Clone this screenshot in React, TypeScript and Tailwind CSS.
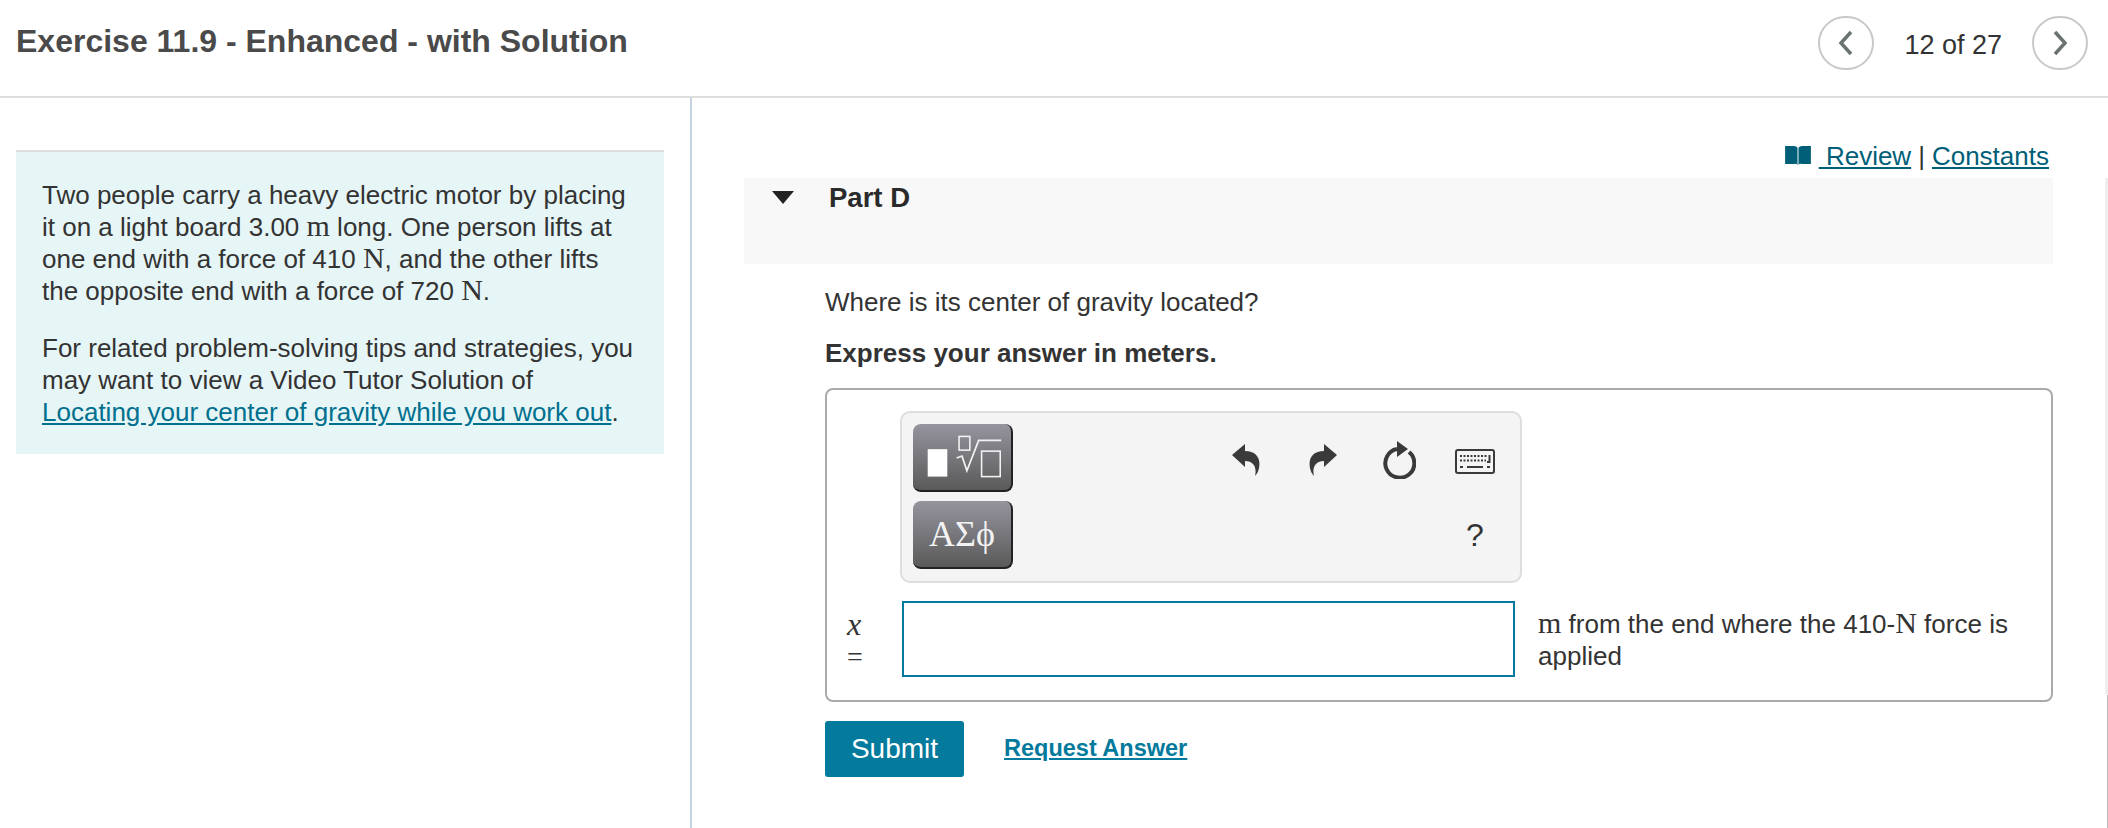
import React from "react";

const sans = "font-['Liberation_Sans',Arial,sans-serif]";
const math = "font-['Liberation_Serif',serif] text-[30px] leading-none";

const Chevron = ({ dir }: { dir: "left" | "right" }) => (
  <svg width="16" height="26" viewBox="0 0 16 26" fill="none">
    <path
      d={dir === "left" ? "M13 2 L3 13 L13 24" : "M3 2 L13 13 L3 24"}
      stroke="#6a7272"
      strokeWidth="3.5"
    />
  </svg>
);

const BookIcon = () => (
  <svg className="mr-[8px]" width="26" height="21" viewBox="0 0 27 22" fill="#005f78">
    <path d="M0 1 H9 Q12 1 13 3 V21 Q12 19 9 20 H0 Z" />
    <path d="M27 1 H18 Q15 1 14 3 V21 Q15 19 18 20 H27 Z" />
  </svg>
);

const UndoIcon = () => (
  <svg width="28" height="32" viewBox="0 0 28 32" fill="#3a3a3a">
    <path d="M0 11 L13 0 V7 C24 7 29 14 27 24 C26.5 27 25 30 23 32 C25 24 22 17 13 17 V23 Z" />
  </svg>
);

const RedoIcon = () => (
  <svg width="28" height="32" viewBox="0 0 28 32" fill="#3a3a3a">
    <path d="M28 11 L15 0 V7 C4 7 -1 14 1 24 C1.5 27 3 30 5 32 C3 24 6 17 15 17 V23 Z" />
  </svg>
);

const ResetIcon = () => (
  <svg width="34" height="38" viewBox="0 0 34 38" fill="none">
    <path d="M27 11 A14.5 14.5 0 1 1 15 8" stroke="#3a3a3a" strokeWidth="4" />
    <path d="M15 0 L26 8 L15 16 Z" fill="#3a3a3a" />
  </svg>
);

const KeyboardIcon = () => (
  <svg className="mt-[3px]" width="40" height="25" viewBox="0 0 40 25" fill="none">
    <rect x="1" y="1" width="38" height="23" rx="2" stroke="#3a3a3a" strokeWidth="2" />
    <path d="M5 7 H33" stroke="#3a3a3a" strokeWidth="2" strokeDasharray="2 1.5" />
    <path d="M5 11.5 H31" stroke="#3a3a3a" strokeWidth="2" strokeDasharray="2 1.5" />
    <path d="M34.5 6 V13 H32" stroke="#3a3a3a" strokeWidth="2" />
    <path d="M5 18 H8 M12 18 H28 M32 18 H35" stroke="#3a3a3a" strokeWidth="2" />
  </svg>
);

const TemplateGlyph = () => (
  <svg width="100" height="68" viewBox="0 0 100 68" fill="none">
    <rect x="15" y="26" width="20" height="28" fill="#fff" />
    <rect x="47" y="13" width="11" height="14" stroke="#f2f2f2" strokeWidth="1.6" />
    <path d="M44.5 35 L50 33 L55 48 L67 17 H90" stroke="#f2f2f2" strokeWidth="1.8" />
    <rect x="70" y="28" width="19" height="26" stroke="#f2f2f2" strokeWidth="1.6" />
  </svg>
);

const MathButton = ({ children }: { children: React.ReactNode }) => (
  <button className="flex h-[68px] w-[100px] items-center justify-center rounded-[8px] border-r-2 border-b-2 border-[#222] bg-gradient-to-b from-[#96959f] to-[#5a5a5a]">
    {children}
  </button>
);

export default function App() {
  return (
    <div className={`${sans} h-[828px] w-[2108px] overflow-hidden bg-white text-[#333]`}>
      {/* HEADER */}
      <header className="flex h-[98px] items-center justify-between border-b-2 border-[#ddd] pl-4 pr-[20px]">
        <h1 className="mt-[-14px] text-[32px] font-bold text-[#4a4a4a]">Exercise 11.9 - Enhanced - with Solution</h1>
        <div className="mt-[-10px] flex items-center">
          <button className="flex h-[54px] w-[56px] items-center justify-center rounded-full border-2 border-[#c8c8c8]">
            <Chevron dir="left" />
          </button>
          <span className="mx-[30px] mt-[5px] text-[27px]">12 of 27</span>
          <button className="flex h-[54px] w-[56px] items-center justify-center rounded-full border-2 border-[#c8c8c8]">
            <Chevron dir="right" />
          </button>
        </div>
      </header>

      <div className="flex h-[730px]">
        {/* PROBLEM INTRO */}
        <aside className="w-[692px] shrink-0 border-r-2 border-[#c5d3e0] pl-4 pt-[52px]">
          <div className="h-[304px] w-[648px] border-t-2 border-[#dcdfe0] bg-[#e6f5f6] pl-[26px] pt-[27px] text-[26px] leading-[32px]">
            <p>
              Two people carry a heavy electric motor by placing
              <br />
              it on a light board 3.00 <span className={math}>m</span> long. One person lifts at
              <br />
              one end with a force of 410 <span className={math}>N</span>, and the other lifts
              <br />
              the opposite end with a force of 720 <span className={math}>N</span>.
            </p>
            <p className="mt-[25px]">
              For related problem-solving tips and strategies, you
              <br />
              may want to view a Video Tutor Solution of
              <br />
              <a href="#" className="text-[#00708f] underline">Locating your center of gravity while you work out</a>.
            </p>
          </div>
        </aside>

        {/* PART D */}
        <main className="min-w-0 flex-1 pl-[52px] pr-[52px]">
          <div className="mt-[35px] flex h-[45px] items-center justify-end pr-[4px] text-[26px] leading-none">
            <BookIcon />
            <a href="#" className="text-[#005f78] underline">&nbsp;Review</a>
            <span className="mx-[7px]">|</span>
            <a href="#" className="text-[#005f78] underline">Constants</a>
          </div>
          <div className="flex h-[86px] bg-[#f8f8f8] pl-[28px] pt-[3px]">
            <svg className="mt-[10px]" width="22" height="14" viewBox="0 0 22 14" fill="#222">
              <path d="M0 0 H22 L11 13 Z" />
            </svg>
            <h2 className="ml-[35px] text-[27.5px] leading-[34px] font-bold text-[#2a2a2a]">Part D</h2>
          </div>

          <div className="pl-[81px]">
            <p className="mt-[22px] text-[26px] leading-[32px]">Where is its center of gravity located?</p>
            <p className="mt-[19px] text-[26px] leading-[32px] font-bold">Express your answer in meters.</p>

            {/* ANSWER BOX */}
            <div className="mt-[19px] h-[314px] rounded-[8px] border-2 border-[#aaa]">
              <div className="ml-[73px] mt-[21px] flex h-[172px] w-[622px] justify-between rounded-[10px] border-2 border-[#ddd] bg-[#f4f4f4] pl-[11px] pt-[11px] pr-[7px]">
                <div className="flex flex-col gap-[9px]">
                  <MathButton><TemplateGlyph /></MathButton>
                  <MathButton>
                    <span className="font-['Liberation_Serif',serif] text-[36px] text-[#f2f2f2]">ΑΣϕ</span>
                  </MathButton>
                </div>
                <div className="grid h-fit grid-cols-[78px_76px_76px_76px]">
                  <div className="flex h-[72px] items-center justify-center"><UndoIcon /></div>
                  <div className="flex h-[72px] items-center justify-center"><RedoIcon /></div>
                  <div className="flex h-[72px] items-center justify-center"><ResetIcon /></div>
                  <div className="flex h-[72px] items-center justify-center"><KeyboardIcon /></div>
                  <div className="col-start-4 flex h-[78px] items-center justify-center text-[32px]">?</div>
                </div>
              </div>

              <div className="mt-[18px] flex">
                <div className="ml-[20px] w-[55px] pt-[7px] font-['Liberation_Serif',serif] text-[28px] leading-[31px]">
                  <i className="text-[32px] leading-none">x</i>
                  <br />
                  =
                </div>
                <div className="h-[76px] w-[613px] border-2 border-[#04799d]" />
                <p className="ml-[23px] w-[510px] pt-[7px] text-[26px] leading-[32px]">
                  <span className={math}>m</span> from the end where the 410-<span className={math}>N</span> force is applied
                </p>
              </div>
            </div>

            {/* ACTIONS */}
            <div className="mt-[19px] flex items-center">
              <button className="h-[56px] w-[139px] rounded-[3px] bg-[#047a9c] text-[28px] text-white">Submit</button>
              <a href="#" className="ml-[40px] text-[23.5px] font-bold text-[#047a9c] underline">Request Answer</a>
            </div>
          </div>
        </main>

        {/* SCROLLBAR EDGE */}
        <div className="flex w-[3px] shrink-0 flex-col pt-[80px]">
          <div className="h-[517px] bg-[#eee]" />
          <div className="ml-[2px] w-px flex-1 bg-[#bbb]" />
        </div>
      </div>
    </div>
  );
}
